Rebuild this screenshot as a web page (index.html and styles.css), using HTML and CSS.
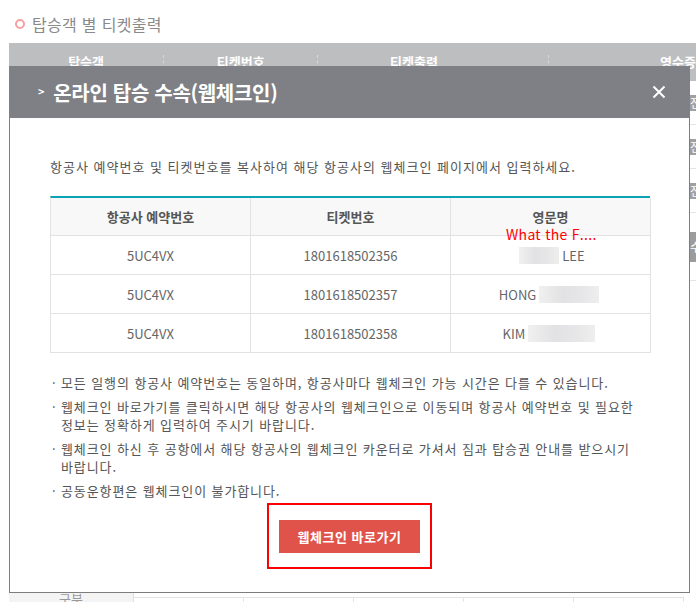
FILE: index.html
```html
<!DOCTYPE html>
<html lang="ko">
<head>
  <meta charset="UTF-8">
  <meta name="viewport" content="width=device-width, initial-scale=1.0">
  <title>탑승객 별 티켓출력</title>
  <link rel="stylesheet" href="styles.css">
</head>
<body>
  <div class="page">
    <h2 class="page-title"><span class="dot"></span>탑승객 별 티켓출력</h2>

    <div class="ticket-list">
      <div class="ticket-head">
        <span class="col-pax">탑승객</span>
        <span class="col-no">티켓번호</span>
        <span class="col-print">티켓출력</span>
        <span class="col-receipt">영수증</span>
      </div>
      <div class="ticket-row"><span class="tag">전</span></div>
      <div class="ticket-row"><span class="tag">전</span></div>
      <div class="ticket-row"><span class="tag">전</span></div>
      <div class="ticket-row tall"><span class="tag dark">수</span></div>
    </div>

    <div class="fare-list">
      <div class="fare-row">
        <span class="fare-label">구분</span>
        <span class="fare-cell"></span>
        <span class="fare-cell"></span>
        <span class="fare-cell"></span>
        <span class="fare-cell"></span>
        <span class="fare-cell"></span>
      </div>
    </div>
  </div>

  <!-- 웹체크인 팝업 -->
  <div class="modal">
    <div class="modal-header">
      <h3 class="modal-title"><span class="arrow">&gt;</span>온라인 탑승 수속(웹체크인)</h3>
      <span class="modal-close">
        <svg width="14" height="14" viewBox="0 0 14 14"><path d="M1.5 1.5 L12.5 12.5 M12.5 1.5 L1.5 12.5" stroke="#fff" stroke-width="2" fill="none"/></svg>
      </span>
    </div>
    <div class="modal-body">
      <p class="intro">항공사 예약번호 및 티켓번호를 복사하여 해당 항공사의 웹체크인 페이지에서 입력하세요.</p>

      <div class="checkin-table">
        <span class="th">항공사 예약번호</span>
        <span class="th">티켓번호</span>
        <span class="th">영문명</span>

        <span class="td">5UC4VX</span>
        <span class="td">1801618502356</span>
        <span class="td"><i class="blur w40"></i>LEE</span>

        <span class="td">5UC4VX</span>
        <span class="td">1801618502357</span>
        <span class="td">HONG<i class="blur w60"></i></span>

        <span class="td">5UC4VX</span>
        <span class="td">1801618502358</span>
        <span class="td">KIM<i class="blur w67"></i></span>

        <span class="note">What the F....</span>
      </div>

      <ul class="notice">
        <li>모든 일행의 항공사 예약번호는 동일하며, 항공사마다 웹체크인 가능 시간은 다를 수 있습니다.</li>
        <li>웹체크인 바로가기를 클릭하시면 해당 항공사의 웹체크인으로 이동되며 항공사 예약번호 및 필요한 정보는 정확하게 입력하여 주시기 바랍니다.</li>
        <li>웹체크인 하신 후 공항에서 해당 항공사의 웹체크인 카운터로 가셔서 짐과 탑승권 안내를 받으시기 바랍니다.</li>
        <li>공동운항편은 웹체크인이 불가합니다.</li>
      </ul>

      <div class="btn-wrap">
        <div class="btn-mark">
          <button class="checkin-btn">웹체크인 바로가기</button>
        </div>
      </div>
    </div>
  </div>
</body>
</html>
```

FILE: styles.css
```css
body {
  margin: 0;
  font-family: "Noto Sans CJK KR", "Noto Sans", sans-serif;
  color: #555;
  background: #fff;
  overflow: hidden;
  word-break: keep-all;
}
.page {
  width: 696px;
  height: 602px;
  overflow: hidden;
}
.page-title {
  margin: 0;
  height: 43px;
  display: flex;
  align-items: center;
  padding: 4px 0 0 15px;
  box-sizing: border-box;
  font-size: 16px;
  font-weight: normal;
  color: #8a8a8a;
  letter-spacing: 0.3px;
}
.dot {
  width: 6px;
  height: 6px;
  border: 2px solid #f4a0a0;
  border-radius: 50%;
  margin-right: 7px;
}
.ticket-list {
  margin-left: 9px;
}
.ticket-head {
  height: 38px;
  background: #bdbec0;
  display: flex;
  align-items: center;
  color: #fff;
  font-size: 13px;
  font-weight: bold;
  white-space: nowrap;
}
.ticket-head span {
  text-align: center;
  border-right: 1px dashed #d8d8d8;
  line-height: 14px;
  box-sizing: border-box;
}
.col-pax { width: 158px; }
.col-no { width: 157px; }
.col-print { width: 234px; padding-right: 38px; }
.col-receipt { width: 150px; text-align: right !important; border-right: 0 !important; padding-right: 0; }
.ticket-row {
  height: 44px;
  box-sizing: border-box;
  border-bottom: 1px solid #e4e4e4;
  display: flex;
  align-items: center;
  justify-content: flex-end;
}
.ticket-row.tall {
  height: 68px;
}
.tag {
  width: 14px;
  background: #a0a0a0;
  color: #fff;
  font-size: 12px;
  line-height: 16px;
  margin-right: -8px;
}
.tag.dark {
  background: #9c9c9c;
  line-height: 30px;
}
.fare-list {
  margin: 309px 0 0 9px;
}
.fare-row {
  display: flex;
  height: 40px;
}
.fare-label {
  width: 125px;
  background: #f4f4f4;
  border-right: 1px solid #e0e0e0;
  text-align: center;
  font-size: 13px;
  color: #999;
  line-height: 14px;
  padding-top: 2px;
  box-sizing: border-box;
}
.fare-cell {
  width: 109px;
  margin-top: 7px;
  border-top: 1px solid #e4e4e4;
  border-right: 1px solid #e4e4e4;
}

/* modal */
.modal {
  position: absolute;
  left: 9px;
  top: 66px;
  width: 681px;
  height: 527px;
  box-sizing: border-box;
  border: 1px solid #7d7d7d;
  border-top: 0;
  background: #fff;
}
.modal-header {
  height: 52px;
  margin: 0 -1px;
  background: #7e8085;
  display: flex;
  align-items: center;
  justify-content: space-between;
  padding: 0 24px 0 29px;
}
.modal-title {
  margin: 0;
  color: #fff;
  font-size: 20px;
  font-weight: bold;
  display: flex;
  align-items: center;
  letter-spacing: -0.3px;
}
.arrow {
  font-size: 11px;
  margin-right: 9px;
  margin-top: -2px;
}
.modal-close {
  display: flex;
}
.modal-body {
  padding: 40px 39px 0 40px;
}
.intro {
  margin: 0;
  font-size: 13px;
  line-height: 18px;
  letter-spacing: 1px;
  color: #555;
}
.checkin-table {
  position: relative;
  margin-top: 20px;
  border-top: 2px solid #0aa2b5;
  display: grid;
  grid-template-columns: 200px 200px 200px;
  border-left: 1px solid #e2e2e2;
}
.th, .td {
  height: 39px;
  display: flex;
  align-items: center;
  justify-content: center;
  border-right: 1px solid #e2e2e2;
  border-bottom: 1px solid #e2e2e2;
  font-size: 13px;
  box-sizing: border-box;
}
.th {
  height: 38px;
  background: #f8f8f8;
  font-weight: bold;
  color: #555;
}
.td {
  color: #666;
}
.blur {
  display: inline-block;
  height: 17px;
  margin: 0 3px;
  background: linear-gradient(90deg, #f0f0f0, #e2e2e4 40%, #e6e6e8 70%, #eeeeee);
}
.w40 { width: 40px; }
.w60 { width: 60px; }
.w67 { width: 67px; }
.note {
  position: absolute;
  left: 455px;
  top: 26px;
  color: #f00;
  font-size: 14px;
  letter-spacing: 0.3px;
}
.notice {
  list-style: none;
  margin: 21px 0 0 2px;
  padding: 0;
  font-size: 13px;
  line-height: 18px;
  color: #555;
  width: 600px;
}
.notice li {
  position: relative;
  padding-left: 9px;
  margin-bottom: 6px;
  letter-spacing: 0.9px;
}
.notice li:before {
  content: "·";
  position: absolute;
  left: 0;
  top: 0;
}
.btn-wrap {
  display: flex;
  justify-content: center;
  margin-top: -3px;
  margin-left: -1px;
}
.btn-mark {
  border: 2px solid #f00;
  padding: 15px 10px 14px 10px;
}
.checkin-btn {
  width: 141px;
  height: 33px;
  border: 0;
  background: #e0534b;
  color: #fff;
  font-family: "Noto Sans CJK KR", sans-serif;
  font-size: 13px;
  font-weight: bold;
  letter-spacing: 0.5px;
}
```
